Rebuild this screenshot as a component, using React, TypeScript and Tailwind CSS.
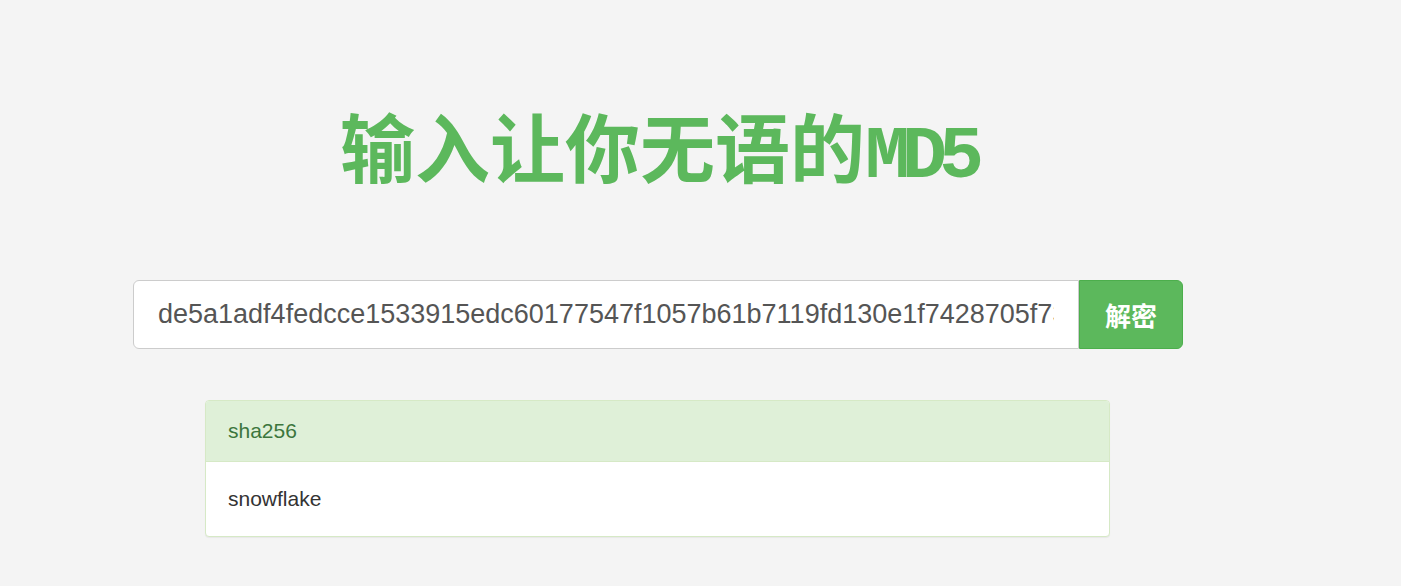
import { useState } from "react";

export default function App() {
  const [hash, setHash] = useState(
    "de5a1adf4fedcce1533915edc60177547f1057b61b7119fd130e1f7428705f73"
  );

  return (
    <div className="min-h-screen bg-[#f4f4f4] font-['Liberation_Sans','Noto_Sans_CJK_SC',sans-serif]">
      <div className="ml-[133px] w-[1050px] pt-[103px]">
        <h1 className="text-center text-[75px] leading-[84px] font-bold text-[#5cb85c] font-['Noto_Sans_CJK_SC',sans-serif]">
          输入让你无语的
          <span className="font-['Liberation_Mono',monospace] tracking-[-8px]">MD5</span>
        </h1>

        <div className="mt-[80px] flex h-[69px]">
          <input
            value={hash}
            onChange={(e) => setHash(e.target.value)}
            className="flex-1 min-w-0 h-full px-6 text-[27px] text-[#555] bg-white border border-[#ccc] rounded-l-[6px] outline-none"
          />
          <button className="w-[104px] h-full bg-[#5cb85c] border border-[#4cae4c] rounded-r-[6px] text-white text-[26px] font-bold font-['Noto_Sans_CJK_SC',sans-serif]">
            解密
          </button>
        </div>
      </div>

      <div className="ml-[205px] mt-[51px] w-[905px] bg-white border border-[#d6e9c6] rounded-[4px] shadow-[0_1px_1px_rgba(0,0,0,0.05)]">
        <div className="h-[61px] flex items-center px-[22px] bg-[#dff0d8] border-b border-[#d6e9c6] rounded-t-[3px] text-[21px] text-[#3c763d]">
          sha256
        </div>
        <div className="h-[74px] flex items-center px-[22px] text-[21px] text-[#333]">
          snowflake
        </div>
      </div>
    </div>
  );
}
